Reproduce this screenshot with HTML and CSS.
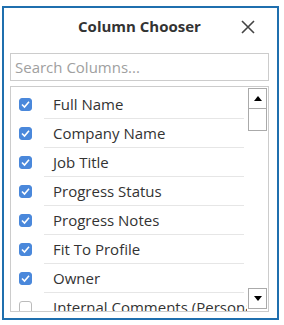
FILE: index.html
```html
<!DOCTYPE html>
<html lang="en">
<head>
  <meta charset="UTF-8" />
  <title>Column Chooser</title>
  <link rel="stylesheet" href="styles.css">
</head>
<body>

<div class="chooser">
  <div class="chooser-head">
    <h2>Column Chooser</h2>
    <span class="close">
      <svg width="14" height="14" viewBox="0 0 14 14"><path d="M1 1 L13 13 M13 1 L1 13" stroke="#444" stroke-width="1.6" fill="none"/></svg>
    </span>
  </div>

  <input class="search" type="text" placeholder="Search Columns...">

  <div class="list">
    <ul class="items">
      <li><span class="box on"></span><span class="label">Full Name</span></li>
      <li><span class="box on"></span><span class="label">Company Name</span></li>
      <li><span class="box on"></span><span class="label">Job Title</span></li>
      <li><span class="box on"></span><span class="label">Progress Status</span></li>
      <li><span class="box on"></span><span class="label">Progress Notes</span></li>
      <li><span class="box on"></span><span class="label">Fit To Profile</span></li>
      <li><span class="box on"></span><span class="label">Owner</span></li>
      <li><span class="box"></span><span class="label">Internal Comments (Personal)</span></li>
    </ul>
    <div class="scrollbar">
      <span class="arrow up"></span>
      <span class="thumb"></span>
      <span class="track"></span>
      <span class="arrow down"></span>
    </div>
  </div>
</div>

</body>
</html>
```

FILE: styles.css
```css
* {
  box-sizing: border-box;
}

body {
  font-family: 'Open Sans', 'Noto Sans', sans-serif;
  background: #fff;
  margin: 0;
  color: #333;
}

.chooser {
  width: 277px;
  height: 314px;
  margin: 6px 0 0 2px;
  padding: 0 8px 0 6px;
  border: 2px solid #1f6fae;
  display: flex;
  flex-direction: column;
}

.chooser-head {
  height: 45px;
  padding-top: 7px;
  display: flex;
  justify-content: center;
  position: relative;
}

h2 {
  margin: 0;
  font-size: 15px;
  line-height: 22px;
  font-weight: 700;
  color: #333;
}

.close {
  position: absolute;
  right: 14px;
  top: 12px;
  width: 14px;
  height: 14px;
  display: flex;
}

.search {
  width: 259px;
  height: 28px;
  margin: 0;
  padding: 0 4px;
  border: 1px solid #ccc;
  font-family: inherit;
  font-size: 15px;
  color: #333;
}

.search::placeholder {
  color: #a0a0a0;
}

.list {
  width: 259px;
  height: 226px;
  margin-top: 5px;
  border: 1px solid #ccc;
  display: flex;
  overflow: hidden;
}

.items {
  list-style: none;
  margin: 0;
  padding: 3px 0 0 0;
  width: 236px;
  overflow: hidden;
}

.items li {
  height: 29px;
  display: flex;
  align-items: center;
}

.box {
  flex: 0 0 13px;
  width: 13px;
  height: 13px;
  margin: 0 12px 0 8px;
  border: 1px solid #bbb;
  border-radius: 3px;
  background: #fff;
}

.box.on {
  border-color: #4a88db;
  background: #4a88db url("data:image/svg+xml,%3Csvg xmlns='http://www.w3.org/2000/svg' width='13' height='13'%3E%3Cpath d='M3 6.5 L5.5 9 L10 3.8' stroke='white' stroke-width='1.6' fill='none'/%3E%3C/svg%3E") center / 13px 13px no-repeat;
}

.label {
  flex: 0 0 200px;
  height: 29px;
  line-height: 28px;
  padding-left: 9px;
  border-bottom: 1px solid #e6e6e6;
  font-size: 15px;
  color: #333;
  white-space: nowrap;
}

.scrollbar {
  width: 21px;
  padding: 1px 0 2px 1px;
  display: flex;
  flex-direction: column;
}

.arrow, .thumb {
  width: 19px;
  border: 1px solid #aaa;
  background: #fff;
  display: flex;
  align-items: center;
  justify-content: center;
}

.arrow {
  height: 21px;
}

.thumb {
  height: 22px;
  border-top: none;
}

.track {
  flex: 1;
}

.arrow::after {
  content: "";
  border-left: 4px solid transparent;
  border-right: 4px solid transparent;
}

.up::after {
  border-bottom: 5px solid #000;
}

.down::after {
  border-top: 5px solid #000;
}
```
